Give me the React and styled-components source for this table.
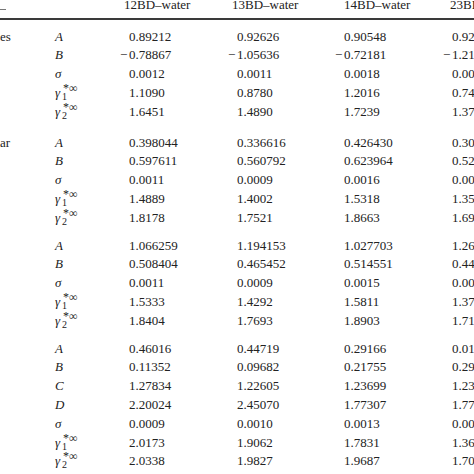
import React from 'react';
import styled, { createGlobalStyle } from 'styled-components';

const Global = createGlobalStyle`
  html, body { margin: 0; padding: 0; background: #fff; }
  body {
    width: 474px;
    height: 474px;
    overflow: hidden;
    font-family: "Liberation Serif", "Times New Roman", serif;
    color: #222;
  }
`;

const Table = styled.div`
  width: 474px;
  font-size: 13px;
  overflow: hidden;
`;

const HeadRow = styled.div`
  display: grid;
  grid-template-columns: 55px 65px 108px 107px 108px 31px;
  height: 18px;
  line-height: 12px;
  border-bottom: 2px solid #3a3a3a;
  white-space: nowrap;
`;

const HeadCell = styled.div`
  padding-left: ${p => p.indent || 0}px;
  margin-top: -1px;
  overflow: visible;
`;

const Rule = styled.span`
  display: block;
  width: 6px;
  margin-top: 10px;
  border-top: 1px solid #777;
`;

const Body = styled.div`
  padding-top: 7.6px;
`;

const Group = styled.div`
  margin-top: ${p => p.gap || 0}px;
`;

const Row = styled.div`
  display: grid;
  grid-template-columns: 55px 65px 108px 107px 108px 31px;
  height: 18.8px;
  line-height: 18.8px;
  white-space: nowrap;
`;

const Label = styled.div`
  overflow: visible;
`;

const Sym = styled.div`
  font-style: italic;
  position: relative;
`;

const Sup = styled.span`
  position: absolute;
  left: 8px;
  top: -5px;
  font-style: normal;
  font-size: 12px;
`;

const Sub = styled.span`
  position: absolute;
  left: 7px;
  top: 4px;
  font-style: normal;
  font-size: 10px;
`;

const Value = styled.div`
  display: flex;
  overflow: visible;
`;

const Sign = styled.span`
  width: 9px;
  flex: none;
`;

const Gamma = ({ n }) => (
  <Sym>
    γ
    <Sup>*∞</Sup>
    <Sub>{n}</Sub>
  </Sym>
);

const groups = [
  {
    gap: 0,
    label: 'es',
    rows: [
      ['A', '0.89212', '0.92626', '0.90548', '0.92'],
      ['B', '−0.78867', '−1.05636', '−0.72181', '−1.21'],
      ['σ', '0.0012', '0.0011', '0.0018', '0.00'],
      ['g1', '1.1090', '0.8780', '1.2016', '0.74'],
      ['g2', '1.6451', '1.4890', '1.7239', '1.37'],
    ],
  },
  {
    gap: 12,
    label: 'ar',
    rows: [
      ['A', '0.398044', '0.336616', '0.426430', '0.30'],
      ['B', '0.597611', '0.560792', '0.623964', '0.52'],
      ['σ', '0.0011', '0.0009', '0.0016', '0.00'],
      ['g1', '1.4889', '1.4002', '1.5318', '1.35'],
      ['g2', '1.8178', '1.7521', '1.8663', '1.69'],
    ],
  },
  {
    gap: 9,
    label: '',
    rows: [
      ['A', '1.066259', '1.194153', '1.027703', '1.26'],
      ['B', '0.508404', '0.465452', '0.514551', '0.44'],
      ['σ', '0.0011', '0.0009', '0.0015', '0.00'],
      ['g1', '1.5333', '1.4292', '1.5811', '1.37'],
      ['g2', '1.8404', '1.7693', '1.8903', '1.71'],
    ],
  },
  {
    gap: 9,
    label: '',
    rows: [
      ['A', '0.46016', '0.44719', '0.29166', '0.01'],
      ['B', '0.11352', '0.09682', '0.21755', '0.29'],
      ['C', '1.27834', '1.22605', '1.23699', '1.23'],
      ['D', '2.20024', '2.45070', '1.77307', '1.77'],
      ['σ', '0.0009', '0.0010', '0.0013', '0.00'],
      ['g1', '2.0173', '1.9062', '1.7831', '1.36'],
      ['g2', '2.0338', '1.9827', '1.9687', '1.70'],
    ],
  },
];

const Num = ({ v }) => {
  const neg = v.startsWith('−');
  return (
    <Value>
      <Sign>{neg ? '−' : ''}</Sign>
      {neg ? v.slice(1) : v}
    </Value>
  );
};

const Symbol = ({ s }) => {
  if (s === 'g1') return <Gamma n="1" />;
  if (s === 'g2') return <Gamma n="2" />;
  return <Sym>{s}</Sym>;
};

export default function App() {
  return (
    <>
      <Global />
      <Table>
        <HeadRow>
          <HeadCell><Rule /></HeadCell>
          <HeadCell />
          <HeadCell indent={4}>12BD–water</HeadCell>
          <HeadCell indent={4}>13BD–water</HeadCell>
          <HeadCell indent={9}>14BD–water</HeadCell>
          <HeadCell indent={7}>23BD–water</HeadCell>
        </HeadRow>
        <Body>
          {groups.map((g, gi) => (
            <Group key={gi} gap={g.gap}>
              {g.rows.map((r, ri) => (
                <Row key={ri}>
                  <Label>{ri === 0 ? g.label : ''}</Label>
                  <Symbol s={r[0]} />
                  <Num v={r[1]} />
                  <Num v={r[2]} />
                  <Num v={r[3]} />
                  <Num v={r[4]} />
                </Row>
              ))}
            </Group>
          ))}
        </Body>
      </Table>
    </>
  );
}
